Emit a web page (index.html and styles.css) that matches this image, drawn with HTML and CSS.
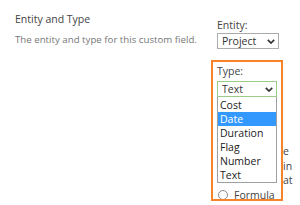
FILE: index.html
```html
<!DOCTYPE html>
<html lang="en">
<head>
    <meta charset="UTF-8">
    <meta name="viewport" content="width=device-width, initial-scale=1.0">
    <title>Custom Field</title>
    <link rel="stylesheet" href="styles.css">
</head>
<body>
    <div class="page">
        <div class="section-info">
            <h2 class="section-title">Entity and Type</h2>
            <p class="section-desc">The entity and type for this custom field.</p>
        </div>

        <div class="section-fields">
            <div class="field">
                <label class="field-label">Entity:</label>
                <div class="select select-entity">
                    <span>Project</span>
                    <svg class="chevron" width="8" height="5" viewBox="0 0 8 5"><polyline points="0.8,0.8 4,4 7.2,0.8" fill="none" stroke="#333" stroke-width="1.7"/></svg>
                </div>
            </div>

            <div class="type-box">
                <label class="field-label">Type:</label>
                <div class="select select-focus">
                    <span>Text</span>
                    <svg class="chevron" width="8" height="5" viewBox="0 0 8 5"><polyline points="0.8,0.8 4,4 7.2,0.8" fill="none" stroke="#333" stroke-width="1.7"/></svg>
                </div>

                <ul class="dropdown">
                    <li>Cost</li>
                    <li class="selected">Date</li>
                    <li>Duration</li>
                    <li>Flag</li>
                    <li>Number</li>
                    <li>Text</li>
                </ul>

                <!-- rows behind the open list: only their tails show past the box -->
                <div class="options">
                    <div class="option option-tail">e</div>
                    <div class="option option-tail">in</div>
                    <div class="option option-tail">at</div>
                    <div class="option"><span class="radio"></span>Formula</div>
                </div>
            </div>
        </div>
    </div>
</body>
</html>
```

FILE: styles.css
```css
* {
    margin: 0;
    padding: 0;
    box-sizing: border-box;
}

body {
    font-family: "Open Sans", Arial, sans-serif;
    background: white;
    width: 300px;
    height: 205px;
    overflow: hidden;
}

.page {
    display: flex;
}

.section-info {
    flex: 0 0 211px;
    padding: 12px 0 0 15px;
}

.section-title {
    font-size: 10.5px;
    font-weight: normal;
    line-height: 14px;
    color: #444;
}

.section-desc {
    margin-top: 8px;
    font-size: 9.7px;
    line-height: 12px;
    color: #777;
}

.section-fields {
    flex: 1;
    padding-top: 18px;
}

.field {
    padding-left: 6px;
}

.field-label {
    display: block;
    font-size: 10.5px;
    line-height: 14px;
    color: #444;
}

.select {
    display: flex;
    align-items: center;
    justify-content: space-between;
    height: 16px;
    padding: 0 3px 0 4px;
    border: 1px solid #ababab;
    font-size: 10.5px;
    color: #333;
    background: white;
}

.select-entity {
    width: 62px;
    margin-top: 1px;
}

.select-focus {
    height: 16px;
    margin-top: 3px;
    border-color: #9acd87;
}

.type-box {
    position: relative;
    width: 72px;
    height: 141px;
    margin-top: 11px;
    padding: 4px 6px 0 6px;
}

/* highlight frame drawn on top of the rows it cuts through */
.type-box::after {
    content: "";
    position: absolute;
    top: 0;
    left: 0;
    right: 0;
    bottom: 0;
    border: 2px solid #f7832a;
    z-index: 3;
    pointer-events: none;
}

.dropdown {
    position: absolute;
    top: 37px;
    left: 6px;
    width: 60px;
    list-style: none;
    padding-top: 1px;
    border: 1px solid #a0a0a0;
    border-top: none;
    background: white;
    z-index: 2;
}

.dropdown li {
    height: 14px;
    padding-left: 2px;
    font-size: 10.5px;
    line-height: 14px;
    color: #222;
}

.dropdown li.selected {
    background: #3399ff;
    color: white;
}

.options {
    margin-top: 47px;
}

.option {
    display: flex;
    align-items: center;
    height: 14.5px;
    font-size: 10.5px;
    color: #444;
    white-space: nowrap;
}

.option-tail {
    padding-left: 66px;
}

.radio {
    width: 10px;
    height: 10px;
    margin: 0 6px 0 1px;
    border: 1px solid #888;
    border-radius: 50%;
    background: white;
}
```
